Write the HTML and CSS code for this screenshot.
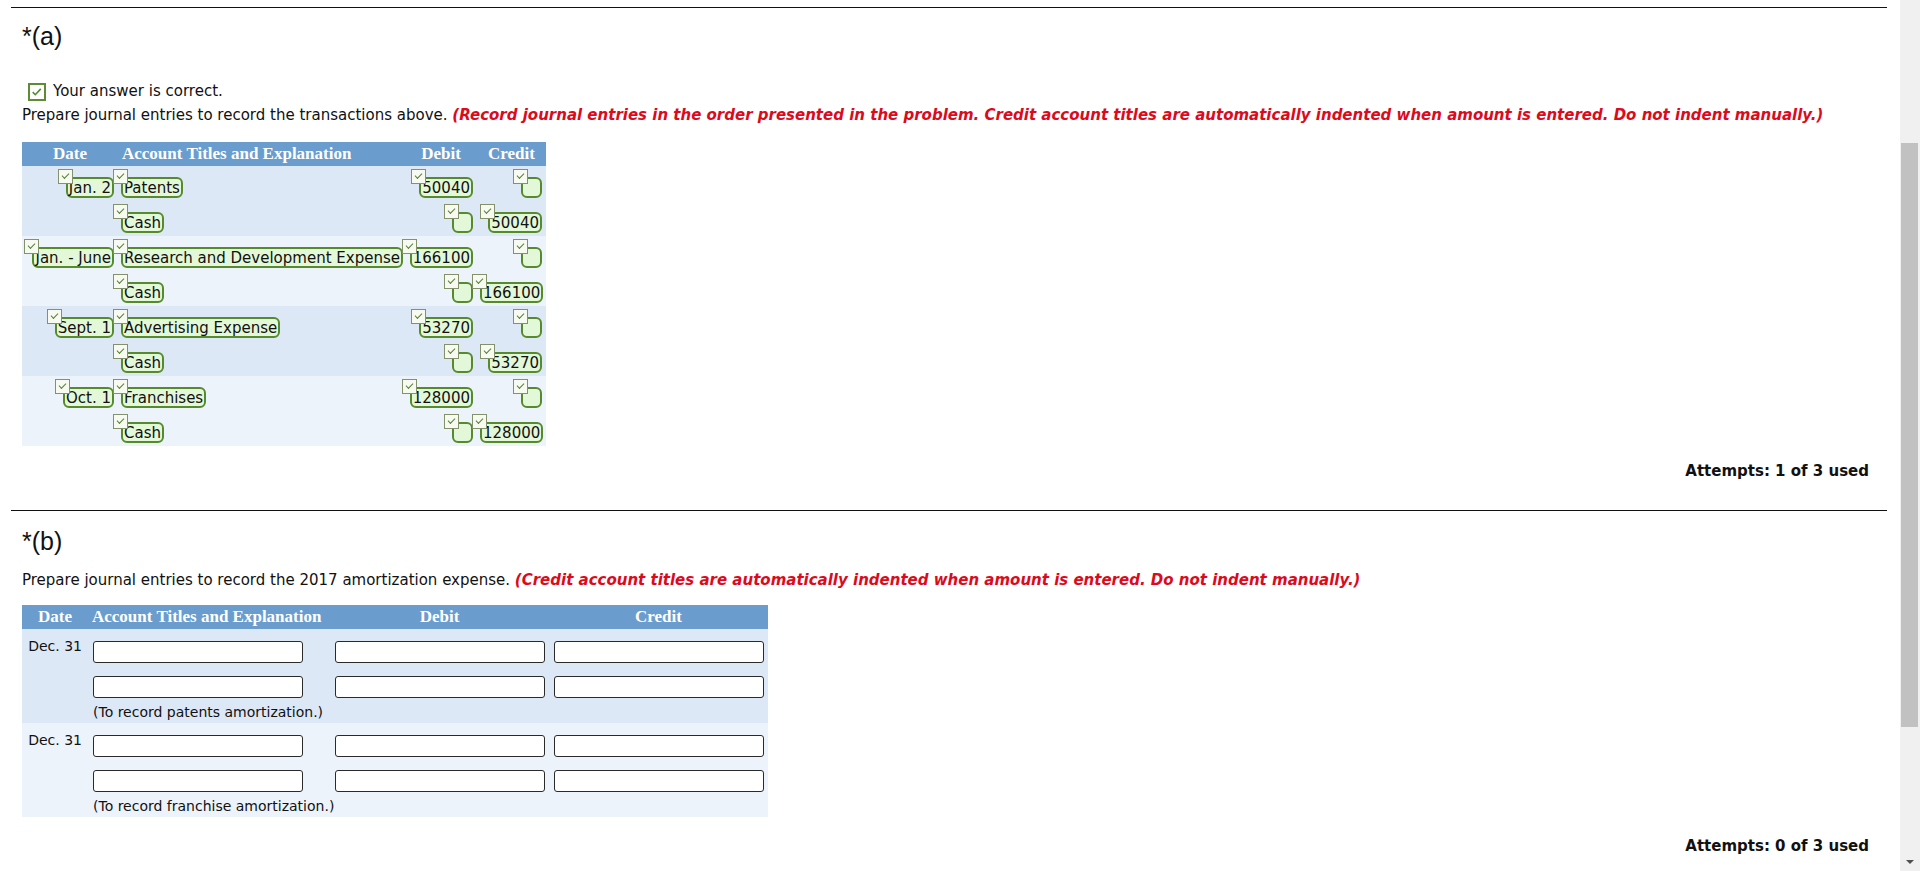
FILE: index.html
```html
<!DOCTYPE html>
<html lang="en">
<head>
  <meta charset="UTF-8">
  <meta name="viewport" content="width=device-width, initial-scale=1.0">
  <title>Journal Entries - Intangible Assets</title>
  <link rel="stylesheet" href="styles.css">
</head>
<body>
  <div class="page">
    <div class="content">

      <!-- part (a) : already graded -->
      <div class="part">
        <h2 class="part-title">*(a)</h2>
        <div class="result">
          <span class="result-box">
            <svg viewBox="0 0 18 18" width="14" height="14"><path d="M3.5 9.2l3.3 3.3 7-7.5" /></svg>
          </span>
          Your answer is correct.
        </div>
        <p class="prompt">Prepare journal entries to record the transactions above. <em class="hint">(Record journal entries in the order presented in the problem. Credit account titles are automatically indented when amount is entered. Do not indent manually.)</em></p>

        <table class="journal graded">
          <colgroup>
            <col class="c-date">
            <col class="c-account">
            <col class="c-debit">
            <col class="c-credit">
          </colgroup>
          <thead>
            <tr>
              <th>Date</th>
              <th class="left">Account Titles and Explanation</th>
              <th>Debit</th>
              <th>Credit</th>
            </tr>
          </thead>
          <tbody class="odd">
            <tr>
              <td class="date"><span class="answer">Jan. 2</span></td>
              <td><span class="answer">Patents</span></td>
              <td class="amount"><span class="answer">50040</span></td>
              <td class="amount"><span class="answer empty"></span></td>
            </tr>
            <tr>
              <td class="date"></td>
              <td><span class="answer">Cash</span></td>
              <td class="amount"><span class="answer empty"></span></td>
              <td class="amount"><span class="answer">50040</span></td>
            </tr>
          </tbody>
          <tbody class="even">
            <tr>
              <td class="date"><span class="answer">Jan. - June</span></td>
              <td><span class="answer">Research and Development Expense</span></td>
              <td class="amount"><span class="answer">166100</span></td>
              <td class="amount"><span class="answer empty"></span></td>
            </tr>
            <tr>
              <td class="date"></td>
              <td><span class="answer">Cash</span></td>
              <td class="amount"><span class="answer empty"></span></td>
              <td class="amount"><span class="answer">166100</span></td>
            </tr>
          </tbody>
          <tbody class="odd">
            <tr>
              <td class="date"><span class="answer">Sept. 1</span></td>
              <td><span class="answer">Advertising Expense</span></td>
              <td class="amount"><span class="answer">53270</span></td>
              <td class="amount"><span class="answer empty"></span></td>
            </tr>
            <tr>
              <td class="date"></td>
              <td><span class="answer">Cash</span></td>
              <td class="amount"><span class="answer empty"></span></td>
              <td class="amount"><span class="answer">53270</span></td>
            </tr>
          </tbody>
          <tbody class="even">
            <tr>
              <td class="date"><span class="answer">Oct. 1</span></td>
              <td><span class="answer">Franchises</span></td>
              <td class="amount"><span class="answer">128000</span></td>
              <td class="amount"><span class="answer empty"></span></td>
            </tr>
            <tr>
              <td class="date"></td>
              <td><span class="answer">Cash</span></td>
              <td class="amount"><span class="answer empty"></span></td>
              <td class="amount"><span class="answer">128000</span></td>
            </tr>
          </tbody>
        </table>

        <div class="attempts">Attempts: 1 of 3 used</div>
      </div>

      <!-- part (b) : open for input -->
      <div class="part open">
        <h2 class="part-title">*(b)</h2>
        <p class="prompt">Prepare journal entries to record the 2017 amortization expense. <em class="hint">(Credit account titles are automatically indented when amount is entered. Do not indent manually.)</em></p>

        <table class="journal entry">
          <colgroup>
            <col class="e-date">
            <col class="e-account">
            <col class="e-debit">
            <col class="e-credit">
          </colgroup>
          <thead>
            <tr>
              <th>Date</th>
              <th class="left">Account Titles and Explanation</th>
              <th>Debit</th>
              <th>Credit</th>
            </tr>
          </thead>
          <tbody class="odd">
            <tr class="first">
              <td class="date">Dec. 31</td>
              <td class="account"><input type="text" class="field"></td>
              <td class="amount"><input type="text" class="field"></td>
              <td class="amount"><input type="text" class="field"></td>
            </tr>
            <tr class="second">
              <td class="date"></td>
              <td class="account"><input type="text" class="field"></td>
              <td class="amount"><input type="text" class="field"></td>
              <td class="amount"><input type="text" class="field"></td>
            </tr>
            <tr class="note">
              <td></td>
              <td colspan="3">(To record patents amortization.)</td>
            </tr>
          </tbody>
          <tbody class="even">
            <tr class="first">
              <td class="date">Dec. 31</td>
              <td class="account"><input type="text" class="field"></td>
              <td class="amount"><input type="text" class="field"></td>
              <td class="amount"><input type="text" class="field"></td>
            </tr>
            <tr class="second">
              <td class="date"></td>
              <td class="account"><input type="text" class="field"></td>
              <td class="amount"><input type="text" class="field"></td>
              <td class="amount"><input type="text" class="field"></td>
            </tr>
            <tr class="note">
              <td></td>
              <td colspan="3">(To record franchise amortization.)</td>
            </tr>
          </tbody>
        </table>

        <div class="attempts">Attempts: 0 of 3 used</div>
      </div>

    </div>

    <div class="scrollbar">
      <div class="thumb"></div>
      <div class="arrow-down"></div>
    </div>
  </div>
</body>
</html>
```

FILE: styles.css
```css
html, body {
  margin: 0;
  height: 100%;
  overflow: hidden;
}

body {
  font-family: "DejaVu Sans", Verdana, sans-serif;
  font-size: 15px;
  color: #111;
  background: #fff;
}

.page {
  display: flex;
  height: 100vh;
}

.content {
  flex: 1;
  padding-top: 7px;
}

.part {
  border-top: 1px solid #111;
  margin: 0 13px 0 11px;
  padding: 0 18px 30px 11px;
}

.part-title {
  font-family: "Liberation Sans", Arial, sans-serif;
  font-weight: normal;
  font-size: 25px;
  line-height: 29px;
  margin: 14px 0 0;
}

.open .part-title {
  margin-top: 16px;
}

.result {
  display: flex;
  align-items: center;
  margin: 31px 0 0 6px;
  height: 19px;
  line-height: 19px;
}

.result-box {
  width: 14px;
  height: 14px;
  border: 2px solid #5f8b35;
  background: #fff;
  margin-right: 7px;
  display: flex;
  align-items: center;
  justify-content: center;
}

.result-box path {
  fill: none;
  stroke: #4f8a2c;
  stroke-width: 2;
}

.prompt {
  margin: 5px 0 0;
  line-height: 18px;
  white-space: nowrap;
}

.open .prompt {
  margin-top: 15px;
}

.hint {
  color: #dc0a1c;
  font-weight: bold;
}

/* journal tables */

.journal {
  border-collapse: collapse;
  table-layout: fixed;
  margin-top: 18px;
}

.open .journal {
  margin-top: 16px;
}

.journal th {
  background: #6a9ccd;
  color: #fff;
  font-family: "Liberation Serif", "Times New Roman", serif;
  font-weight: bold;
  font-size: 17px;
  height: 24px;
  padding: 0 4px;
  text-align: center;
  white-space: nowrap;
}

.journal th.left {
  text-align: left;
}

.journal tbody.odd {
  background: #dde8f6;
}

.journal tbody.even {
  background: #edf3fb;
}

.journal td {
  white-space: nowrap;
  vertical-align: top;
}

/* part (a) columns */

.graded {
  width: 524px;
}

.c-date { width: 96px; }
.c-account { width: 287px; }
.c-debit { width: 72px; }
.c-credit { width: 69px; }

.graded td {
  padding: 11px 4px 3px 3px;
  line-height: 21px;
  font-size: 15px;
}

.graded td.date,
.graded td.amount {
  text-align: right;
}

.answer {
  position: relative;
  display: inline-block;
  vertical-align: top;
  height: 17px;
  line-height: 18px;
  padding: 0 1px;
  border: 2px solid #578a2c;
  border-radius: 6px;
  background: #e3f8d8;
  color: #111;
}

.answer.empty {
  width: 15px;
}

/* little check mark box over the corner of a graded field */
.answer::before {
  content: "";
  position: absolute;
  left: -10px;
  top: -10px;
  width: 13px;
  height: 13px;
  border: 1px solid #84926c;
  background: #f6faf0;
}

.answer::after {
  content: "";
  position: absolute;
  left: -6px;
  top: -6.5px;
  width: 6px;
  height: 3px;
  border-left: 1.5px solid #557f33;
  border-bottom: 1.5px solid #557f33;
  transform: rotate(-45deg);
}

/* part (b) columns */

.entry {
  width: 746px;
}

.e-date { width: 66px; }
.e-account { width: 242px; }
.e-debit { width: 219px; }
.e-credit { width: 219px; }

.entry td {
  padding: 0;
  font-size: 14px;
}

.entry td.date {
  text-align: right;
  padding: 8px 6px 0 0;
  line-height: 18px;
}

.entry tr.first td.account,
.entry tr.first td.amount {
  padding-top: 12px;
}

.entry tr.second td.account,
.entry tr.second td.amount {
  padding-top: 13px;
}

.entry td.account {
  padding-left: 5px;
}

.entry td.amount {
  text-align: center;
}

.entry tr.note td {
  padding: 5px 0 2px 5px;
  line-height: 18px;
}

.field {
  display: block;
  box-sizing: border-box;
  width: 210px;
  height: 22px;
  margin: 0;
  border: 1px solid #2a2a2a;
  border-radius: 3px;
  background: #fff;
  font-family: "DejaVu Sans", Verdana, sans-serif;
  font-size: 13px;
}

.entry td.amount .field {
  margin: 0 auto;
}

.attempts {
  text-align: right;
  font-weight: bold;
  line-height: 18px;
  margin-top: 16px;
}

.open .attempts {
  margin-top: 20px;
}

/* fake window scrollbar */

.scrollbar {
  width: 20px;
  background: #f0f0f0;
  display: flex;
  flex-direction: column;
}

.thumb {
  margin: 143px 2px 0 1px;
  height: 584px;
  background: #c1c1c1;
}

.arrow-down {
  margin: auto auto 7px;
  width: 0;
  height: 0;
  border-left: 4px solid transparent;
  border-right: 4px solid transparent;
  border-top: 4px solid #505050;
}
```
